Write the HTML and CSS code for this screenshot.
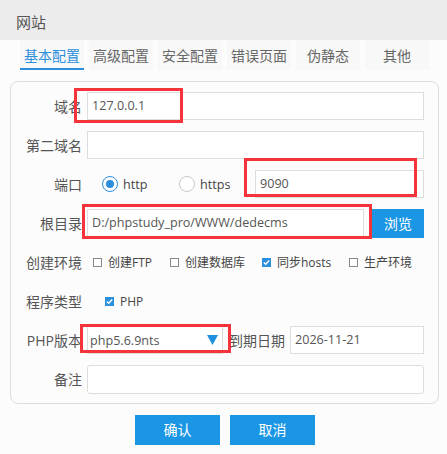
FILE: index.html
```html
<!DOCTYPE html>
<html lang="zh-CN">
<head>
<meta charset="utf-8">
<title>网站</title>
<link rel="stylesheet" href="styles.css">
</head>
<body>
<div class="header"><span class="title">网站</span></div>
<div class="tabs">
  <div class="tab active">基本配置</div>
  <div class="tab">高级配置</div>
  <div class="tab">安全配置</div>
  <div class="tab">错误页面</div>
  <div class="tab">伪静态</div>
  <div class="tab">其他</div>
</div>
<div class="panel">
  <div class="row">
    <div class="lbl">域名</div>
    <div class="field">127.0.0.1</div>
  </div>
  <div class="row">
    <div class="lbl">第二域名</div>
    <div class="field"></div>
  </div>
  <div class="row">
    <div class="lbl">端口</div>
    <div class="radio-opt opt-http"><span class="radio on"></span><span class="opt-text">http</span></div>
    <div class="radio-opt opt-https"><span class="radio"></span><span class="opt-text">https</span></div>
    <div class="field">9090</div>
  </div>
  <div class="row">
    <div class="lbl">根目录</div>
    <div class="field">D:/phpstudy_pro/WWW/dedecms</div>
    <div class="btn-browse">浏览</div>
  </div>
  <div class="row">
    <div class="lbl">创建环境</div>
    <div class="checks">
      <div class="chk-opt w1"><span class="chk"></span><span class="chk-text">创建FTP</span></div>
      <div class="chk-opt w2"><span class="chk"></span><span class="chk-text">创建数据库</span></div>
      <div class="chk-opt w3"><span class="chk on"><svg viewBox="0 0 9 9" width="9" height="9"><path d="M1.8 4.6 L3.7 6.3 L7.2 2.6" fill="none" stroke="#fff" stroke-width="1.4"/></svg></span><span class="chk-text">同步hosts</span></div>
      <div class="chk-opt"><span class="chk"></span><span class="chk-text">生产环境</span></div>
    </div>
  </div>
  <div class="row">
    <div class="lbl">程序类型</div>
    <div class="checks checks-type">
      <div class="chk-opt"><span class="chk on"><svg viewBox="0 0 9 9" width="9" height="9"><path d="M1.8 4.6 L3.7 6.3 L7.2 2.6" fill="none" stroke="#fff" stroke-width="1.4"/></svg></span><span class="chk-text">PHP</span></div>
    </div>
  </div>
  <div class="row">
    <div class="lbl">PHP版本</div>
    <div class="select"><span class="sel-text">php5.6.9nts</span><svg class="arrow" viewBox="0 0 11 10" width="11" height="10"><path d="M0 0 H11 L5.5 10 Z" fill="#1f8fe0"/></svg></div>
    <div class="lbl-inline">到期日期</div>
    <div class="field date">2026-11-21</div>
  </div>
  <div class="row">
    <div class="lbl">备注</div>
    <div class="field note"></div>
  </div>
</div>
<div class="actions">
  <div class="btn">确认</div>
  <div class="btn">取消</div>
</div>
<div class="mark mark-domain"></div>
<div class="mark mark-port"></div>
<div class="mark mark-root"></div>
<div class="mark mark-php"></div>
</body>
</html>
```
FILE: styles.css
```css
* { box-sizing: border-box; }
body {
  margin: 0;
  width: 447px;
  height: 454px;
  background: #fcfcfc;
  font-family: "Open Sans", "Noto Sans CJK SC", sans-serif;
  color: #555;
  position: relative;
  overflow: hidden;
}
.header {
  height: 40px;
  background: #ececec;
  padding: 2px 0 0 16px;
  display: flex;
  align-items: center;
}
.title { font-size: 15px; color: #555; }
.tabs {
  display: flex;
  gap: 5px;
  padding-left: 20px;
  height: 30px;
}
.tab {
  width: 64px;
  height: 30px;
  background: #f8f8f8;
  text-align: center;
  font-size: 14px;
  line-height: 32px;
  color: #666;
}
.tab.active {
  color: #2b8fdc;
  border-bottom: 2px solid #2b8fdc;
}
.panel {
  margin: 11px 0 0 10px;
  width: 429px;
  border: 1px solid #dddddd;
  border-radius: 8px;
  padding: 10px 14px 10px 0;
  display: flex;
  flex-direction: column;
  gap: 11px;
}
.row {
  display: flex;
  align-items: center;
  height: 28px;
}
.lbl {
  width: 71px;
  margin-right: 5px;
  text-align: right;
  font-size: 14px;
  color: #555;
  flex: none;
}
.field {
  flex: 1;
  height: 28px;
  border: 1px solid #dddddd;
  background: #fff;
  font-size: 12.6px;
  line-height: 26px;
  padding-left: 4px;
  color: #555;
  white-space: nowrap;
  overflow: hidden;
}
.field.note { height: 29px; border-radius: 3px; }
.radio-opt {
  display: flex;
  align-items: center;
  flex: none;
}
.opt-http { width: 92px; padding-left: 15px; }
.opt-https { width: 76px; }
.radio {
  width: 16px;
  height: 16px;
  border-radius: 50%;
  border: 1px solid #c8c8c8;
  background: #fff;
  margin-right: 5px;
  display: flex;
  align-items: center;
  justify-content: center;
}
.radio.on { border-color: #2b8fdc; }
.radio.on::after {
  content: "";
  width: 8px;
  height: 8px;
  border-radius: 50%;
  background: #2b8fdc;
}
.opt-text { font-size: 12.6px; color: #444; }
.btn-browse {
  width: 52px;
  height: 29px;
  margin-left: 8px;
  background: #1a96e4;
  color: #fff;
  font-size: 14px;
  text-align: center;
  line-height: 29px;
  flex: none;
}
.checks {
  display: flex;
  align-items: center;
  padding-left: 6px;
}
.checks-type { padding-left: 18px; }
.chk-opt {
  display: flex;
  align-items: center;
  flex: none;
}
.w1 { width: 77px; }
.w2 { width: 92px; }
.w3 { width: 87px; }
.chk {
  width: 9px;
  height: 9px;
  border: 1px solid #888;
  background: #fff;
  margin-right: 6px;
  display: flex;
}
.chk.on { border: none; background: #2b8fdc; }
.chk-text { font-size: 12px; color: #444; }
.select {
  width: 136px;
  height: 28px;
  flex: none;
  border: 1px solid #dddddd;
  background: #fff;
  display: flex;
  align-items: center;
  justify-content: space-between;
  padding: 0 4px 0 2px;
  font-size: 12.6px;
  color: #555;
}
.lbl-inline {
  font-size: 14px;
  color: #555;
  margin: 0 5px 0 6px;
  flex: none;
}
.field.date { flex: 1; }
.actions {
  display: flex;
  justify-content: center;
  gap: 10px;
  margin-top: 11px;
  padding-left: 3px;
}
.btn {
  width: 85px;
  height: 30px;
  background: #1a96e4;
  color: #fff;
  font-size: 14px;
  text-align: center;
  line-height: 30px;
}
.mark {
  position: absolute;
  border: 3px solid #f5333a;
}
.mark-domain { left: 74px; top: 88px; width: 109px; height: 35px; }
.mark-port { left: 244px; top: 158px; width: 173px; height: 39px; }
.mark-root { left: 82px; top: 204px; width: 290px; height: 35px; }
.mark-php { left: 80px; top: 324px; width: 151px; height: 29px; }
```
